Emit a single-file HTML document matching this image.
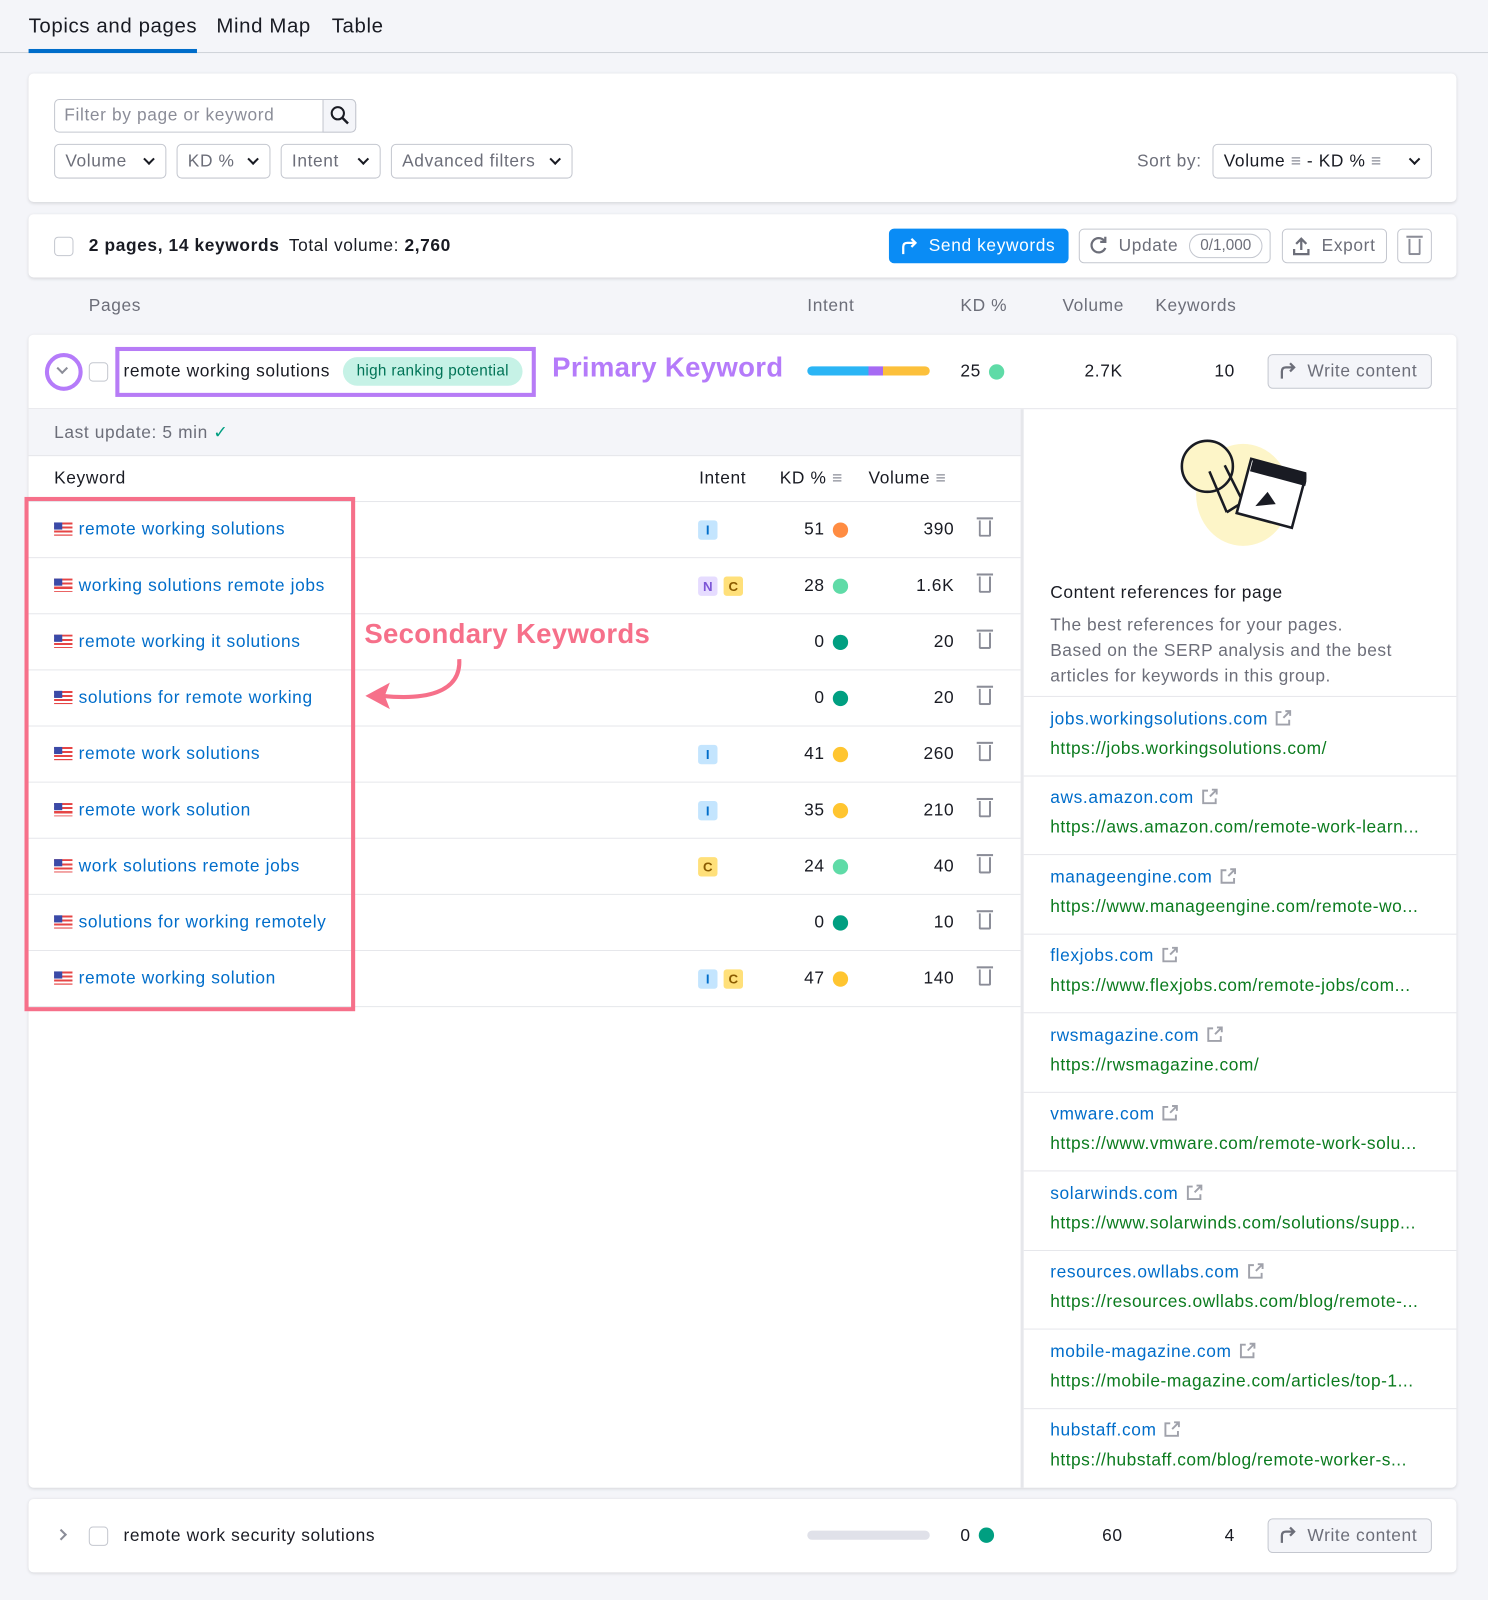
<!DOCTYPE html>
<html><head><meta charset="utf-8"><style>
*{box-sizing:border-box;margin:0;padding:0}
html,body{width:1488px;height:1600px;overflow:hidden;background:#f4f5f9;font-family:"Liberation Sans",Arial,sans-serif;color:#191b23;letter-spacing:.6px}
#w{position:absolute;left:0;top:0;width:1458px;height:1568px;transform:scale(1.0206,1.0204);transform-origin:0 0}
.a{position:absolute;white-space:nowrap}
.card{position:absolute;background:#fff;border-radius:5px;box-shadow:0 1px 3px rgba(0,0,0,.12)}
.btn{position:absolute;border:1px solid #c4c7cf;border-radius:5px;background:#fff;font-size:17px;color:#6c6e79;display:flex;align-items:center}
.dd{position:absolute;border:1px solid #c4c7cf;border-radius:5px;background:#fff;font-size:17px;color:#6c6e79;height:34px;top:141px;padding-left:10px;line-height:32px}
.chev{position:absolute;right:12px;top:10px;width:8px;height:8px;border-right:2px solid #191b23;border-bottom:2px solid #191b23;transform:rotate(45deg)}
.cb{position:absolute;width:19px;height:19px;border:1px solid #c4c7cf;border-radius:4px;background:#fff}
.hd{position:absolute;top:290px;font-size:17px;color:#6c6e79}
.row{position:absolute;left:28px;width:972px;height:55px;border-bottom:1px solid #e6e7eb}
.kw{position:absolute;left:49px;top:17px;font-size:17px;color:#006dca}
.flag{position:absolute;left:25px;top:20px;width:18px;height:13px;background:repeating-linear-gradient(#e64545 0 2px,#fff 2px 4px)}
.flag:after{content:"";position:absolute;left:0;top:0;width:8px;height:7px;background:#3a4aa8}
.ib{position:absolute;top:18px;width:19px;height:19px;border-radius:3px;font-size:13px;font-weight:bold;text-align:center;line-height:19px;letter-spacing:0}
.I{background:#c4e5fe;color:#006dca}.N{background:#e6dcff;color:#7c56d6}.C{background:#ffe07a;color:#8a5a00}
.kd{position:absolute;right:192px;top:17px;font-size:17px;width:40px;text-align:right}
.dot{position:absolute;left:788px;top:20px;width:15px;height:15px;border-radius:50%}
.vol{position:absolute;right:65px;top:17px;font-size:17px;text-align:right}
.tr{position:absolute;left:931px;top:18px;width:12px;height:16px;border:2px solid #8b8d98;border-top:none;border-radius:0 0 2px 2px}
.tr:before{content:"";position:absolute;left:-4px;top:-3px;width:16px;height:2px;background:#8b8d98}
.ref{position:absolute;left:1003px;width:424px;height:78px;border-bottom:1px solid #e6e7eb}
.dom{position:absolute;left:26px;top:12px;font-size:17px;color:#006dca}
.url{position:absolute;left:26px;top:41px;font-size:17px;color:#0b7b1e;letter-spacing:.5px}
.ext{margin-left:7px;vertical-align:-2px}
</style></head><body><div id="w">
<svg width="0" height="0" style="position:absolute"><defs><symbol id="ex" viewBox="0 0 18 18"><path d="M7 3H2v13h13v-5" fill="none" stroke="#a0a2ab" stroke-width="2"/><path d="M9 9L16 2M11 2h5v5" fill="none" stroke="#a0a2ab" stroke-width="2"/></symbol></defs></svg>
<!-- tabs -->
<div class="a" style="left:28px;top:15px;font-size:20px">Topics and pages</div>
<div class="a" style="left:212px;top:15px;font-size:20px">Mind Map</div>
<div class="a" style="left:325px;top:15px;font-size:20px">Table</div>
<div class="a" style="left:0;top:51px;width:1458px;height:1px;background:#cfd2d9"></div>
<div class="a" style="left:28px;top:48px;width:165px;height:4px;background:#006dca"></div>

<!-- filter card -->
<div class="card" style="left:28px;top:72px;width:1399px;height:126px"></div>
<div class="a" style="left:53px;top:97px;width:296px;height:33px;border:1px solid #c4c7cf;border-radius:5px;background:#fff"></div>
<div class="a" style="left:63px;top:103px;font-size:17px;color:#8b8d98">Filter by page or keyword</div>
<div class="a" style="left:316px;top:97px;width:33px;height:33px;border:1px solid #c4c7cf;border-radius:0 5px 5px 0;background:#f4f5f9"></div>
<svg class="a" style="left:322px;top:102px" width="22" height="22" viewBox="0 0 22 22"><circle cx="9" cy="9" r="6" fill="none" stroke="#191b23" stroke-width="2"/><path d="M13.5 13.5L19 19" stroke="#191b23" stroke-width="2.4"/></svg>
<div class="dd" style="left:53px;width:110px">Volume<span class="chev"></span></div>
<div class="dd" style="left:173px;width:92px">KD %<span class="chev"></span></div>
<div class="dd" style="left:275px;width:98px">Intent<span class="chev"></span></div>
<div class="dd" style="left:383px;width:178px">Advanced filters<span class="chev"></span></div>
<div class="a" style="left:1114px;top:148px;font-size:17px;color:#6c6e79">Sort by:</div>
<div class="dd" style="left:1188px;width:215px;color:#191b23">Volume <span style="color:#8b8d98">≡</span> - KD % <span style="color:#8b8d98">≡</span><span class="chev"></span></div>

<!-- summary card -->
<div class="card" style="left:28px;top:210px;width:1399px;height:62px"></div>
<div class="cb" style="left:53px;top:232px"></div>
<div class="a" style="left:87px;top:231px;font-size:17px;font-weight:bold">2 pages, 14 keywords</div>
<div class="a" style="left:283px;top:231px;font-size:17px">Total volume: <b>2,760</b></div>
<div class="btn" style="left:871px;top:224px;width:176px;height:34px;background:#0a8cf5;border-color:#0a8cf5;color:#fff;padding-left:38px">Send keywords</div>
<svg class="a" style="left:881px;top:231px" width="20" height="20" viewBox="0 0 20 20"><path d="M4 18V11Q4 7 8 7H16M12 3L16 7L12 11" fill="none" stroke="#fff" stroke-width="2.2"/></svg>
<div class="btn" style="left:1057px;top:224px;width:188px;height:34px;padding-left:38px">Update</div>
<svg class="a" style="left:1066px;top:231px" width="20" height="20" viewBox="0 0 20 20"><path d="M16 5A7 7 0 1 0 17 12" fill="none" stroke="#6c6e79" stroke-width="2.2"/><path d="M17 1V6H12" fill="none" stroke="#6c6e79" stroke-width="2.2"/></svg>
<div class="a" style="left:1165px;top:229px;width:72px;height:24px;border:1px solid #c4c7cf;border-radius:12px;font-size:15px;color:#6c6e79;text-align:center;line-height:22px;letter-spacing:0">0/1,000</div>
<div class="btn" style="left:1256px;top:224px;width:103px;height:34px;padding-left:38px">Export</div>
<svg class="a" style="left:1265px;top:231px" width="20" height="20" viewBox="0 0 20 20"><path d="M10 14V3M5 8L10 3L15 8M3 13V18H17V13" fill="none" stroke="#6c6e79" stroke-width="2.2"/></svg>
<div class="btn" style="left:1369px;top:224px;width:34px;height:34px"></div>
<div class="tr" style="left:1380px;top:234px"></div>

<!-- header -->
<div class="hd" style="left:87px">Pages</div>
<div class="hd" style="left:791px">Intent</div>
<div class="hd" style="left:941px">KD %</div>
<div class="hd" style="left:1041px">Volume</div>
<div class="hd" style="left:1132px">Keywords</div>

<!-- main card -->
<div class="card" style="left:28px;top:328px;width:1399px;height:1130px"></div>
<div class="a" style="left:28px;top:400px;width:1399px;height:1px;background:#e6e7eb"></div>
<div class="a" style="left:44px;top:346px;width:37px;height:37px;border:4px solid #b57bfa;border-radius:50%"></div>
<div class="a" style="left:57px;top:357px;width:8px;height:8px;border-right:2px solid #8b8d98;border-bottom:2px solid #8b8d98;transform:rotate(45deg)"></div>
<div class="cb" style="left:87px;top:355px"></div>
<div class="a" style="left:113px;top:340px;width:412px;height:49px;border:4px solid #b77cf6"></div>
<div class="a" style="left:121px;top:354px;font-size:17px">remote working solutions</div>
<div class="a" style="left:336px;top:350px;width:176px;height:28px;border-radius:14px;background:#c6f2e6;color:#007356;font-size:15px;text-align:center;line-height:28px;letter-spacing:.3px">high ranking potential</div>
<div class="a" style="left:541px;top:345px;font-size:27px;font-weight:bold;color:#b57bfa;letter-spacing:.3px">Primary Keyword</div>
<div class="a" style="left:791px;top:359px;width:120px;height:9px;border-radius:5px;background:linear-gradient(90deg,#2bb5f5 0 50%,#a66af3 50% 62%,#fcc03b 62%)"></div>
<div class="a" style="left:941px;top:354px;font-size:17px">25</div>
<div class="a" style="left:969px;top:357px;width:15px;height:15px;border-radius:50%;background:#5fdba7"></div>
<div class="a" style="left:1040px;top:354px;width:60px;text-align:right;font-size:17px">2.7K</div>
<div class="a" style="left:1150px;top:354px;width:60px;text-align:right;font-size:17px">10</div>
<div class="btn" style="left:1242px;top:347px;width:161px;height:34px;padding-left:38px;background:#f4f5f9">Write content</div>
<svg class="a" style="left:1252px;top:353px" width="20" height="20" viewBox="0 0 20 20"><path d="M4 18V11Q4 7 8 7H16M12 3L16 7L12 11" fill="none" stroke="#6c6e79" stroke-width="2.2"/></svg>

<!-- left area -->
<div class="a" style="left:28px;top:401px;width:972px;height:46px;background:#f4f5f9;border-bottom:1px solid #e6e7eb"></div>
<div class="a" style="left:53px;top:414px;font-size:17px;color:#6c6e79">Last update: 5 min <span style="color:#009f81">✓</span></div>
<div class="a" style="left:1000px;top:401px;width:3px;height:1057px;background:#e6e7eb"></div>
<div class="a" style="left:28px;top:447px;width:972px;height:45px;border-bottom:1px solid #e6e7eb"></div>
<div class="a" style="left:53px;top:459px;font-size:17px">Keyword</div>
<div class="a" style="left:685px;top:459px;font-size:17px">Intent</div>
<div class="a" style="left:764px;top:459px;font-size:17px">KD % <span style="color:#8b8d98">≡</span></div>
<div class="a" style="left:851px;top:459px;font-size:17px">Volume <span style="color:#8b8d98">≡</span></div>

<div class="row" style="top:492px"><span class="flag"></span><span class="kw">remote working solutions</span><span class="ib I" style="left:656px">I</span><span class="kd">51</span><span class="dot" style="background:#ff8c42"></span><span class="vol">390</span><span class="tr"></span></div>
<div class="row" style="top:547px"><span class="flag"></span><span class="kw">working solutions remote jobs</span><span class="ib N" style="left:656px">N</span><span class="ib C" style="left:681px">C</span><span class="kd">28</span><span class="dot" style="background:#5fdba7"></span><span class="vol">1.6K</span><span class="tr"></span></div>
<div class="row" style="top:602px"><span class="flag"></span><span class="kw">remote working it solutions</span><span class="kd">0</span><span class="dot" style="background:#009f81"></span><span class="vol">20</span><span class="tr"></span></div>
<div class="row" style="top:657px"><span class="flag"></span><span class="kw">solutions for remote working</span><span class="kd">0</span><span class="dot" style="background:#009f81"></span><span class="vol">20</span><span class="tr"></span></div>
<div class="row" style="top:712px"><span class="flag"></span><span class="kw">remote work solutions</span><span class="ib I" style="left:656px">I</span><span class="kd">41</span><span class="dot" style="background:#ffc530"></span><span class="vol">260</span><span class="tr"></span></div>
<div class="row" style="top:767px"><span class="flag"></span><span class="kw">remote work solution</span><span class="ib I" style="left:656px">I</span><span class="kd">35</span><span class="dot" style="background:#ffc530"></span><span class="vol">210</span><span class="tr"></span></div>
<div class="row" style="top:822px"><span class="flag"></span><span class="kw">work solutions remote jobs</span><span class="ib C" style="left:656px">C</span><span class="kd">24</span><span class="dot" style="background:#5fdba7"></span><span class="vol">40</span><span class="tr"></span></div>
<div class="row" style="top:877px"><span class="flag"></span><span class="kw">solutions for working remotely</span><span class="kd">0</span><span class="dot" style="background:#009f81"></span><span class="vol">10</span><span class="tr"></span></div>
<div class="row" style="top:932px"><span class="flag"></span><span class="kw">remote working solution</span><span class="ib I" style="left:656px">I</span><span class="ib C" style="left:681px">C</span><span class="kd">47</span><span class="dot" style="background:#ffc530"></span><span class="vol">140</span><span class="tr"></span></div>

<div class="a" style="left:24px;top:487px;width:324px;height:504px;border:4px solid #f6708a"></div>
<div class="a" style="left:357px;top:606px;font-size:27px;font-weight:bold;color:#f6708a;letter-spacing:.3px">Secondary Keywords</div>
<svg class="a" style="left:355px;top:640px" width="100" height="60" viewBox="0 0 100 60"><path d="M95 6 C97 40 60 46 20 42" fill="none" stroke="#f6708a" stroke-width="4"/><path d="M3 42 L27 29 L22 42 L27 55 Z" fill="#f6708a"/></svg>

<!-- right panel -->
<svg class="a" style="left:1150px;top:430px" width="130" height="108" viewBox="0 0 130 108"><ellipse cx="68" cy="55" rx="46" ry="50" fill="#fdf5c8"/><circle cx="33" cy="27" r="25" fill="#fdf5c8" stroke="#191b23" stroke-width="2.5"/><path d="M35 32 L52 72 M52 72 L68 62 L50 26" fill="none" stroke="#191b23" stroke-width="2.5"/><rect x="68" y="26" width="56" height="55" transform="rotate(15 96 53)" fill="#fff" stroke="#191b23" stroke-width="2.5"/><rect x="70" y="26" width="56" height="12" transform="rotate(15 96 53)" fill="#191b23"/><path d="M80 66 L92 52 L100 64 Z" fill="#191b23"/></svg>
<div class="a" style="left:1029px;top:571px;font-size:17px">Content references for page</div>
<div class="a" style="left:1029px;top:600px;font-size:17px;color:#6c6e79;line-height:25px;letter-spacing:.5px">The best references for your pages.<br>Based on the SERP analysis and the best<br>articles for keywords in this group.</div>
<div class="a" style="left:1003px;top:682px;width:424px;height:1px;background:#e6e7eb"></div>
<div class="ref" style="top:683px"><span class="dom">jobs.workingsolutions.com<svg class="ext" width="17" height="17"><use href="#ex"/></svg></span><span class="url">https://jobs.workingsolutions.com/</span></div>
<div class="ref" style="top:760px"><span class="dom">aws.amazon.com<svg class="ext" width="17" height="17"><use href="#ex"/></svg></span><span class="url">https://aws.amazon.com/remote-work-learn...</span></div>
<div class="ref" style="top:838px"><span class="dom">manageengine.com<svg class="ext" width="17" height="17"><use href="#ex"/></svg></span><span class="url">https://www.manageengine.com/remote-wo...</span></div>
<div class="ref" style="top:915px"><span class="dom">flexjobs.com<svg class="ext" width="17" height="17"><use href="#ex"/></svg></span><span class="url">https://www.flexjobs.com/remote-jobs/com...</span></div>
<div class="ref" style="top:993px"><span class="dom">rwsmagazine.com<svg class="ext" width="17" height="17"><use href="#ex"/></svg></span><span class="url">https://rwsmagazine.com/</span></div>
<div class="ref" style="top:1070px"><span class="dom">vmware.com<svg class="ext" width="17" height="17"><use href="#ex"/></svg></span><span class="url">https://www.vmware.com/remote-work-solu...</span></div>
<div class="ref" style="top:1148px"><span class="dom">solarwinds.com<svg class="ext" width="17" height="17"><use href="#ex"/></svg></span><span class="url">https://www.solarwinds.com/solutions/supp...</span></div>
<div class="ref" style="top:1225px"><span class="dom">resources.owllabs.com<svg class="ext" width="17" height="17"><use href="#ex"/></svg></span><span class="url">https://resources.owllabs.com/blog/remote-...</span></div>
<div class="ref" style="top:1303px"><span class="dom">mobile-magazine.com<svg class="ext" width="17" height="17"><use href="#ex"/></svg></span><span class="url">https://mobile-magazine.com/articles/top-1...</span></div>
<div class="ref" style="top:1380px;border:none"><span class="dom">hubstaff.com<svg class="ext" width="17" height="17"><use href="#ex"/></svg></span><span class="url">https://hubstaff.com/blog/remote-worker-s...</span></div>

<!-- bottom card -->
<div class="card" style="left:28px;top:1469px;width:1399px;height:72px"></div>
<div class="a" style="left:56px;top:1500px;width:8px;height:8px;border-right:2px solid #8b8d98;border-bottom:2px solid #8b8d98;transform:rotate(-45deg)"></div>
<div class="cb" style="left:87px;top:1496px"></div>
<div class="a" style="left:121px;top:1495px;font-size:17px">remote work security solutions</div>
<div class="a" style="left:791px;top:1500px;width:120px;height:9px;border-radius:5px;background:#e0e1e9"></div>
<div class="a" style="left:941px;top:1495px;font-size:17px">0</div>
<div class="a" style="left:959px;top:1497px;width:15px;height:15px;border-radius:50%;background:#009f81"></div>
<div class="a" style="left:1040px;top:1495px;width:60px;text-align:right;font-size:17px">60</div>
<div class="a" style="left:1150px;top:1495px;width:60px;text-align:right;font-size:17px">4</div>
<div class="btn" style="left:1242px;top:1488px;width:161px;height:34px;padding-left:38px;background:#f4f5f9">Write content</div>
<svg class="a" style="left:1252px;top:1494px" width="20" height="20" viewBox="0 0 20 20"><path d="M4 18V11Q4 7 8 7H16M12 3L16 7L12 11" fill="none" stroke="#6c6e79" stroke-width="2.2"/></svg>
</div></body></html>
